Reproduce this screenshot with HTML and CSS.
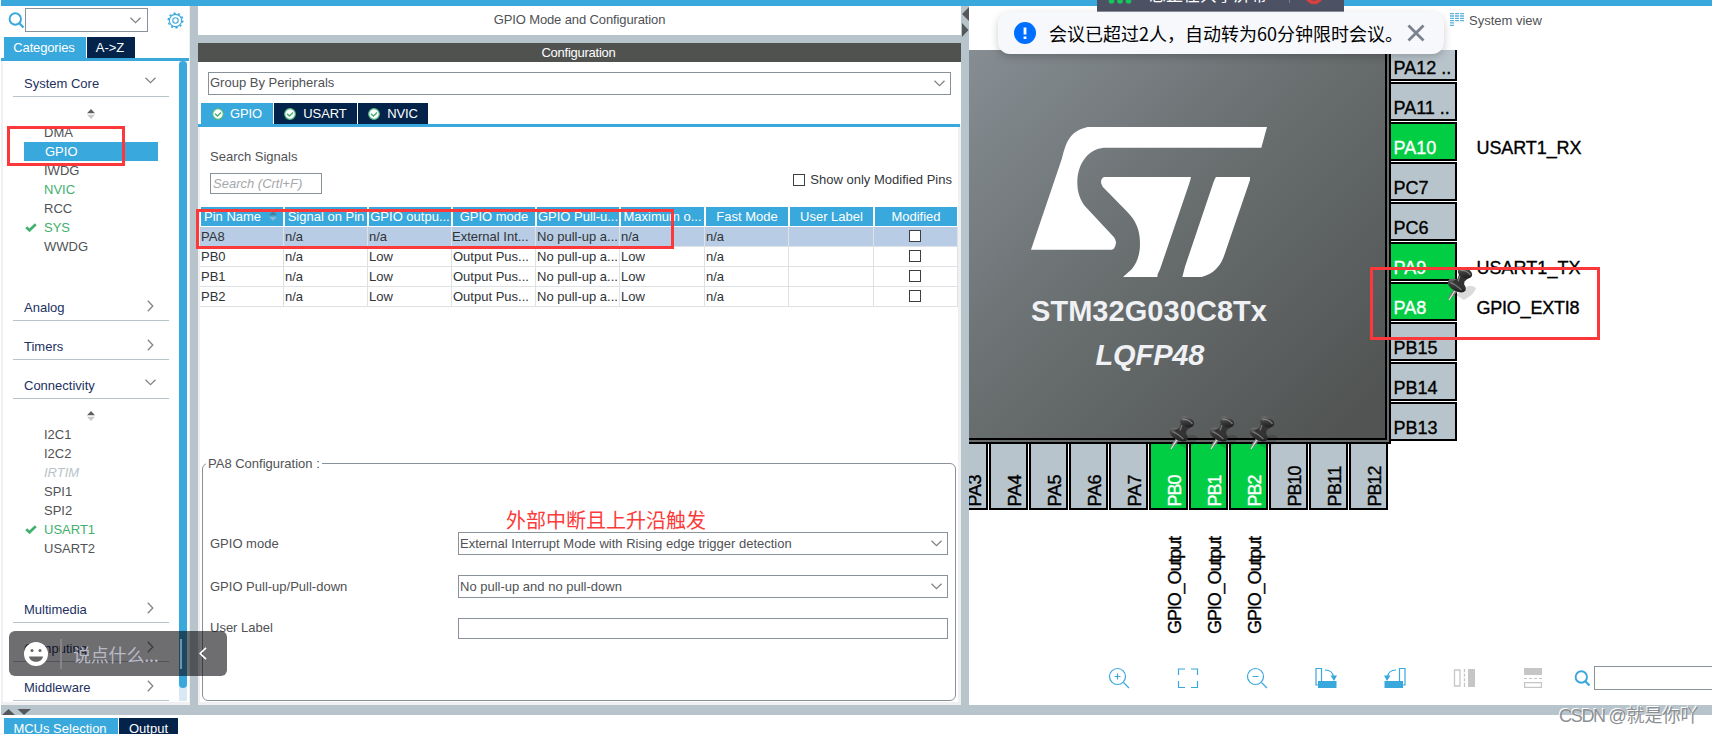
FILE: index.html
```html
<!DOCTYPE html>
<html lang="en">
<head>
<meta charset="utf-8">
<title>GPIO Mode and Configuration</title>
<link rel="stylesheet" href="styles.css">
</head>
<body>
<svg width="0" height="0" class="defs">
  <symbol id="down" viewBox="0 0 11 7"><path d="M.5 .8 5.5 5.6 10.500 .8" fill="none" stroke="#808487" stroke-width="1.3"/></symbol>
  <symbol id="right" viewBox="0 0 7 12"><path d="M.8 .8 5.800 6 .8 11.200" fill="none" stroke="#808487" stroke-width="1.3"/></symbol>
  <symbol id="sort" viewBox="0 0 8 10"><path d="M4 0 8 4.200H0Z" fill="#5d6063"/><path d="M0 5.800H8L4 10Z" fill="#c6c8ca"/></symbol>
  <symbol id="tick" viewBox="0 0 12 9"><path d="M1.200 4.200 4.500 7.300 10.800 1.200" fill="none" stroke="#41b06e" stroke-width="2.600"/></symbol>
  <symbol id="ok" viewBox="0 0 12 12"><circle cx="6" cy="6" r="5.300" fill="#fff" stroke="#55b983" stroke-width="1.200"/><path d="M3 5.700 5.500 8 9 4.600" fill="none" stroke="#41b06e" stroke-width="1.400"/></symbol>
  <symbol id="search" viewBox="0 0 17 17"><circle cx="7.300" cy="7" r="5.700" fill="none" stroke="#39a8dc" stroke-width="1.900"/><path d="M11.300 11.300 15.500 15.600" stroke="#39a8dc" stroke-width="2.200"/></symbol>
</svg>

<div class="app">
  <div class="topbar"></div>
  <div class="workspace">
    <aside class="side">
      <div class="side-search">
        <svg class="mag"><use href="#search"/></svg>
        <div class="box side-input"><svg class="down"><use href="#down"/></svg></div>
        <svg class="gear" viewBox="0 0 17 17"><circle cx="8.500" cy="8.500" r="6.100"/><circle cx="8.500" cy="8.500" r="2.700"/><circle class="teeth" cx="8.500" cy="8.500" r="7.300"/></svg>
      </div>
      <div class="tabs side-tabs"><span class="tab on cat">Categories</span><span class="tab az">A-&gt;Z</span></div>
      <div class="tree-wrap">
        <div class="tree">
          <div class="group first"><span>System Core</span><svg class="down"><use href="#down"/></svg></div>
          <div class="items">
            <svg class="sort"><use href="#sort"/></svg>
            <div class="item">DMA</div>
            <div class="item sel">GPIO</div>
            <div class="item">IWDG</div>
            <div class="item green">NVIC</div>
            <div class="item">RCC</div>
            <div class="item green"><svg class="tick"><use href="#tick"/></svg>SYS</div>
            <div class="item">WWDG</div>
          </div>
          <div class="group"><span>Analog</span><svg class="right"><use href="#right"/></svg></div>
          <div class="group"><span>Timers</span><svg class="right"><use href="#right"/></svg></div>
          <div class="group"><span>Connectivity</span><svg class="down"><use href="#down"/></svg></div>
          <div class="items">
            <svg class="sort"><use href="#sort"/></svg>
            <div class="item">I2C1</div>
            <div class="item">I2C2</div>
            <div class="item off">IRTIM</div>
            <div class="item">SPI1</div>
            <div class="item">SPI2</div>
            <div class="item green"><svg class="tick"><use href="#tick"/></svg>USART1</div>
            <div class="item">USART2</div>
          </div>
          <div class="group"><span>Multimedia</span><svg class="right"><use href="#right"/></svg></div>
          <div class="group"><span>Computing</span><svg class="right"><use href="#right"/></svg></div>
          <div class="group"><span>Middleware</span><svg class="right"><use href="#right"/></svg></div>
        </div>
        <div class="track"><div class="thumb"></div></div>
      </div>
    </aside>

    <main class="config">
      <div class="title">GPIO Mode and Configuration</div>
      <div class="bar">Configuration</div>
      <div class="box select group-by"><span>Group By Peripherals</span><svg class="down"><use href="#down"/></svg></div>
      <div class="tabs conf-tabs">
        <span class="tab on t1"><svg class="ok"><use href="#ok"/></svg>GPIO</span>
        <span class="tab t2"><svg class="ok"><use href="#ok"/></svg>USART</span>
        <span class="tab t3"><svg class="ok"><use href="#ok"/></svg>NVIC</span>
      </div>
      <div class="panel">
        <div class="signals">Search Signals</div>
        <div class="filter">
          <div class="box signal-input">Search (Crtl+F)</div>
          <label class="only"><i class="check"></i>Show only Modified Pins</label>
        </div>
        <div class="table">
          <div class="row head"><b class="left">Pin Name<svg class="sort dim"><use href="#sort"/></svg></b><b>Signal on Pin</b><b>GPIO outpu...</b><b>GPIO mode</b><b>GPIO Pull-u...</b><b>Maximum o...</b><b>Fast Mode</b><b>User Label</b><b>Modified</b></div>
          <div class="row hot"><span>PA8</span><span>n/a</span><span>n/a</span><span class="ext">External Int...</span><span>No pull-up a...</span><span>n/a</span><span>n/a</span><span></span><span class="mid"><i class="check"></i></span></div>
          <div class="row"><span>PB0</span><span>n/a</span><span>Low</span><span>Output Pus...</span><span>No pull-up a...</span><span>Low</span><span>n/a</span><span></span><span class="mid"><i class="check"></i></span></div>
          <div class="row"><span>PB1</span><span>n/a</span><span>Low</span><span>Output Pus...</span><span>No pull-up a...</span><span>Low</span><span>n/a</span><span></span><span class="mid"><i class="check"></i></span></div>
          <div class="row"><span>PB2</span><span>n/a</span><span>Low</span><span>Output Pus...</span><span>No pull-up a...</span><span>Low</span><span>n/a</span><span></span><span class="mid"><i class="check"></i></span></div>
        </div>
        <div class="pin-conf">
          <div class="legend">PA8 Configuration :</div>
          <div class="field"><span>GPIO mode</span><div class="box select"><span>External Interrupt Mode with Rising edge trigger detection</span><svg class="down"><use href="#down"/></svg></div></div>
          <div class="field"><span>GPIO Pull-up/Pull-down</span><div class="box select"><span>No pull-up and no pull-down</span><svg class="down"><use href="#down"/></svg></div></div>
          <div class="field last"><span>User Label</span><div class="box select"></div></div>
        </div>
      </div>
    </main>

    <div class="splitter"><svg viewBox="0 0 8 40"><path d="M8 1V15L1 8ZM1 17V31L7.500 24Z" fill="#55585b"/></svg></div>

    <section class="view">
      <div class="view-head">
        <svg width="14" height="13" viewBox="0 0 14 13"><path d="M0 .7H4M0 3H4M0 5.300H4M0 7.600H4M0 9.900H4M0 12.300H4M5 .7H9M5 3H9M5 5.300H9M5 7.600H9M10 .7H14M10 3H14M10 5.300H14M10 7.600H14" stroke="#5cb3dd" stroke-width="1.300"/></svg>
        <span>System view</span>
      </div>
      <svg class="chip" viewBox="969 50 743 600" width="743" height="600">
        <defs>
          <linearGradient id="body" gradientUnits="userSpaceOnUse" x1="969" y1="60" x2="1340" y2="431"><stop offset="0" stop-color="#858d92"/><stop offset=".5" stop-color="#686d6e"/><stop offset="1" stop-color="#515453"/></linearGradient>
          <linearGradient id="metal" x1="0" y1="0" x2="1" y2="1"><stop offset="0" stop-color="#8a8a8a"/><stop offset=".45" stop-color="#3c3c3c"/><stop offset="1" stop-color="#131313"/></linearGradient>
          <g id="pushpin">
            <path d="M9 28 16 22C21 19 23 17 29 21 27 27 22 30 17 33Z" fill="#000" opacity=".14"/>
            <path d="M1 34 2.500 28.500 7 22 11 24 6 29.500Z" fill="#777"/>
            <path d="M2 33 8 23.500" stroke="#e4e4e4" stroke-width="1.200"/>
            <ellipse cx="9.800" cy="18.500" rx="10" ry="5.600" transform="rotate(30 9.800 18.500)" fill="url(#metal)"/>
            <path d="M5 14.500 10.500 12 12.500 6 22 10.500 17.500 14.500 16.500 21.500Z" fill="#333"/>
            <ellipse cx="18" cy="6" rx="7.600" ry="5" transform="rotate(24 18 6)" fill="url(#metal)"/>
            <path d="M13.500 3.500C17 3 21 5 23.500 8M13 9 11 14.500M3.500 15.500C7 17 11 19.500 14.500 23" stroke="#aaa" stroke-width="1.200" fill="none" opacity=".6"/>
          </g>
        </defs>
        <rect x="960" y="40" width="430" height="403" fill="#686c6d" stroke="#000" stroke-width="2"/>
        <rect x="960" y="40" width="426" height="399" fill="url(#body)" stroke="#000" stroke-width="2"/>
        <g fill="#fff" transform="translate(960 0) scale(.33333)">
          <path d="M383 381H921L904 443H432C385 447 352 490 352 548C352 580 362 602 378 622L462 712Q472 725 465 740Q462 748 455 749H213L305 478C318 430 325 395 383 381Z"/>
          <path d="M432 531H693Q690 545 686 556L600 808Q592 822 592 831H489L515 808C530 790 540 765 540 732C540 700 533 678 520 658Q515 650 500 634L428 560Q420 548 425 538Q428 532 432 531Z"/>
          <path d="M768 531H870V540L792 768C783 795 762 822 725 831H667L675 800 760 548Q764 536 768 531Z"/>
        </g>
        <text class="chip-name" x="1031" y="321" textLength="236">STM32G030C8Tx</text>
        <text class="chip-name slant" x="1095.500" y="365" textLength="109">LQFP48</text>
        <g id="pins"></g>
      </svg>
      <div class="tools">
        <svg width="22" height="22" viewBox="0 0 22 22"><g class="ln"><circle cx="9.500" cy="9.500" r="8"/><path d="M15.500 15.500 21 21M6.500 9.500H12.500M9.500 6.500V12.500"/></g></svg>
        <svg width="22" height="22" viewBox="0 0 22 22"><path class="ln" d="M8 2H1.500V8M14 2H20.500V8M8 20.500H1.500V14M14 20.500H20.500V14"/></svg>
        <svg width="22" height="22" viewBox="0 0 22 22"><g class="ln"><circle cx="9.500" cy="9.500" r="8"/><path d="M15.500 15.500 21 21M6.500 9.500H12.500"/></g></svg>
        <svg width="22" height="22" viewBox="0 0 22 22"><path class="ln" d="M1 1.500H6.500V18H1ZM10 3C15 3 18 6 18.500 10"/><path d="M3 14H21.500V21H3ZM15.500 8.500H22L19 14Z" fill="#39a8dc"/></svg>
        <svg width="22" height="22" viewBox="0 0 22 22"><path class="ln" d="M21 1.500H15.500V18H21ZM12 3C7 3 4 6 3.500 10"/><path d="M.5 14H19V21H.5ZM0 8.500H6.500L3 14Z" fill="#39a8dc"/></svg>
        <svg width="22" height="22" viewBox="0 0 22 22"><path d="M1.500 3H7V19H1.500ZM11.500 2V20" fill="none" stroke="#c6c6c6" stroke-width="1.300"/><path d="M10.500 6H13M10.500 10.500H13M10.500 15H13" stroke="#fff" stroke-width="1.300"/><path d="M15 2H22V20H15Z" fill="#c6c6c6"/></svg>
        <svg width="22" height="22" viewBox="0 0 22 22"><path d="M2 1H20V8H2Z" fill="#c6c6c6"/><path d="M2 11.500H20" stroke="#c6c6c6" stroke-dasharray="3 2"/><path d="M2.600 15.600H19.400V20.400H2.600Z" fill="none" stroke="#c6c6c6" stroke-width="1.300"/></svg>
        <svg class="mag"><use href="#search"/></svg>
        <div class="box tool-input"></div>
      </div>
    </section>
  </div>
  <div class="divider"><svg width="30" height="6" viewBox="0 0 30 6"><path d="M0 6H13L6.500 0ZM15.500 0H29L22 6Z" fill="#55585b"/></svg></div>
  <div class="tabs bottom-tabs"><span class="tab on mcus">MCUs Selection</span><span class="tab out">Output</span></div>
</div>

<div class="mark m1"></div>
<div class="mark m2"></div>
<div class="mark m3"></div>
<div class="note">外部中断且上升沿触发</div>

<div class="share">
  <svg width="247" height="12" viewBox="0 0 247 12"><path d="M14.500-4V1M23-4V1M31.500-4V1" stroke="#12c95b" stroke-width="5.500" stroke-linecap="round"/><path d="M192.500 0V3" stroke="#7b8090"/><circle cx="217" cy="-5" r="7.500" fill="none" stroke="#d84040" stroke-width="3.500"/></svg>
  <span>您正在共享屏幕</span>
</div>
<div class="toast">
  <svg width="22" height="22" viewBox="0 0 22 22"><circle cx="11" cy="11" r="11" fill="#006eff"/><path d="M11 5.500V12.500M11 14.500V17" stroke="#fff" stroke-width="2.800"/></svg>
  <span>会议已超过2人，自动转为60分钟限时会议。</span>
  <svg width="18" height="18" viewBox="0 0 18 18"><path d="M1.500 1.500 16.500 16.500M16.500 1.500 1.500 16.500" stroke="#7a808e" stroke-width="2.800"/></svg>
</div>
<div class="chat">
  <svg width="24" height="24" viewBox="0 0 24 24"><circle cx="12" cy="12" r="12" fill="#fff"/><path d="M5 14.500H19C18 21.500 6 21.500 5 14.500Z" fill="#666"/><circle cx="8" cy="8.500" r="1.500" fill="#666"/><circle cx="16" cy="8.500" r="1.500" fill="#666"/></svg>
  <i></i><span>说点什么...</span><i></i>
  <svg width="8" height="13" viewBox="0 0 8 13"><path d="M7 .8 1.200 6.500 7 12.200" fill="none" stroke="#fff" stroke-width="1.700"/></svg>
</div>
<div class="watermark"><span>CSDN @</span>就是你吖</div>
<script src="pins.js"></script>
</body>
</html>
```
FILE: pins.js
```js
// Draws the pins on the right and bottom edges of the package.
var side = [['PA12 ..'], ['PA11 ..'], ['PA10', 'USART1_RX', 105], ['PC7'], ['PC6'], ['PA9', 'USART1_TX', 104], ['PA8', 'GPIO_EXTI8', 103], ['PB15'], ['PB14'], ['PB13']];
var bottom = ['PA3', 'PA4', 'PA5', 'PA6', 'PA7', 'PB0', 'PB1', 'PB2', 'PB10', 'PB11', 'PB12'];
var out = '';
side.forEach(function (p, i) {
  var y = 42 + i * 40, used = p.length > 1;
  out += '<rect class="pin' + (used ? ' used' : '') + '" x="1390" y="' + (y + 1) + '" width="66" height="37"/>';
  out += '<text class="pin-text' + (used ? ' lit' : '') + '" x="1393.500" y="' + (y + 32) + '">' + p[0] + '</text>';
  if (used) out += '<text class="pin-text" x="1476.500" y="' + (y + 32) + '" textLength="' + p[2] + '">' + p[1] + '</text>';
});
bottom.forEach(function (name, i) {
  var x = 949 + i * 40, used = /^PB[012]$/.test(name);
  out += '<rect class="pin' + (used ? ' used' : '') + '" x="' + (x + 1) + '" y="443" width="37" height="66"/>';
  out += '<text class="pin-text' + (used ? ' lit' : '') + '" textLength="' + (name.length === 3 ? 32 : 41) + '" transform="translate(' + (x + 32) + ' 506.500) rotate(-90)">' + name + '</text>';
  if (used) out += '<text class="pin-text" textLength="98" transform="translate(' + (x + 32) + ' 634) rotate(-90)">GPIO_Output</text>';
});
out += '<path d="M1390 50V443H969" fill="none" stroke="#000" stroke-width="2"/>';
[[1169, 416], [1209, 416], [1249, 416], [1447, 267]].forEach(function (p) {
  out += '<use href="#pushpin" transform="translate(' + p[0] + ' ' + p[1] + ')"/>';
});
document.getElementById('pins').innerHTML = out;
```
FILE: styles.css
```css
* { box-sizing: border-box; }
body {
  margin: 0;
  width: 1712px;
  height: 734px;
  overflow: hidden;
  position: relative;
  background: #fff;
  color: #505255;
  font: 13px/16px "Liberation Sans", Arial, "Noto Sans CJK SC", sans-serif;
}
svg { display: block; flex: none; }
.defs { position: absolute; }
.app { height: 734px; padding-left: 1px; display: flex; flex-direction: column; overflow: hidden; }
.topbar { height: 6px; flex: none; background: #39a8dc; }
.workspace { height: 699px; flex: none; display: flex; }
.box { border: 1px solid #8a9299; background: #fff; display: flex; align-items: center; }
.down { width: 11px; height: 7px; }
.right { width: 7px; height: 12px; margin-right: 2px; }
.sort { width: 8px; height: 10px; }
.mag { width: 17px; height: 17px; }
.tabs { display: flex; gap: 1px; align-items: flex-end; }
.tab { height: 21px; background: #03234b; color: #fff; display: flex; align-items: center; justify-content: center; white-space: nowrap; }
.tab.on { background: #39a8dc; }

/* category tree */
.side { width: 189px; border-right: 1px solid #eef0f2; display: flex; flex-direction: column; flex: none; }
.side-search { display: flex; align-items: center; height: 31px; padding: 2px 0 5px 7px; }
.side-input { width: 123px; height: 24px; justify-content: flex-end; padding-right: 6px; }
.gear { width: 17px; height: 17px; margin-left: 19px; fill: none; stroke: #39a8dc; stroke-width: 1.1; }
.teeth { stroke-width: 1.4; stroke-dasharray: 2.3 2.287; }
.side-tabs { height: 24px; padding-left: 3px; align-items: flex-start; border-bottom: 3px solid #39a8dc; }
.cat { width: 82px; letter-spacing: -.15px; padding-right: 2px; }
.az { width: 48px; padding-right: 2px; }
.tree-wrap { flex: 1; display: flex; border-left: 2px solid #f0f0f2; border-bottom: 3px solid #f0f0f2; overflow: hidden; }
.tree { width: 176px; padding: 0 10px; margin-top: -3px; flex: none; }
.group { height: 39px; border-bottom: 1px solid #b8c4cb; display: flex; justify-content: space-between; padding: 18px 13px 0 11px; color: #22315f; }
.group .down { margin-top: 1px; }
.items { height: 185px; padding: 13px 11px 0; }
.items .sort { margin: -1px 0 4px 62.5px; }
.item { height: 19px; line-height: 19px; padding-left: 20px; display: flex; }
.sel { background: #39a8dc; color: #fff; padding-left: 21px; }
.green { color: #41b06e; }
.off { color: #b8c4cb; font-style: italic; }
.tick { width: 12px; height: 9px; margin: 5px 7px 0 -19px; }
.track { width: 8px; height: 640px; background: #d8e8f5; }
.thumb { width: 8px; height: 627px; background: #39a8dc; border-radius: 4px; }

/* configuration */
.config { width: 771px; border-left: 8px solid #b8c4cb; flex: none; display: flex; flex-direction: column; }
.title { height: 37px; flex: none; padding-top: 6px; border-bottom: 8px solid #b8c4cb; text-align: center; letter-spacing: -.12px; }
.bar { height: 19px; line-height: 20px; background: #505250; color: #fff; text-align: center; letter-spacing: -.25px; padding-right: 2px; flex: none; }
.select { padding: 0 5px 0 1px; justify-content: space-between; height: 23px; }
.group-by { margin: 10px 10px 8px; padding-bottom: 1px; flex: none; }
.conf-tabs { padding-left: 3px; height: 21px; flex: none; }
.conf-tabs .tab { letter-spacing: -.1px; }
.ok { width: 12px; height: 12px; margin-right: 6px; }
.t1 { width: 72px; }
.t2 { width: 83px; }
.t3 { width: 70px; }
.t2 .ok, .t3 .ok { margin-right: 7px; }
.panel { flex: 1; border: solid #f0f0f2; border-width: 0 3px 3px 2px; position: relative; display: flex; flex-direction: column; }
.panel::before { content: ""; height: 3px; background: #39a8dc; margin: 0 -2px; flex: none; }
.signals { margin: 22px 0 8px 10px; }
.filter { height: 21px; display: flex; justify-content: space-between; padding: 0 6px 0 10px; }
.signal-input { width: 112px; padding-left: 2px; color: #a5a8ab; font-style: italic; }
.only { display: flex; align-items: center; gap: 5px; color: #34373a; height: 14px; white-space: nowrap; }
.check { width: 12px; height: 12px; border: 1px solid #3c3f42; background: #fff; }
.table { margin-top: 13px; color: #303336; }
.row { display: grid; grid-template-columns: 84px 84px 84px 84px 84px 85px 84px 85px 84px; height: 20px; margin-right: -1px; }
.row > * { border: solid #dfe2e5; border-width: 0 1px 1px 0; padding-left: 1px; line-height: 19px; white-space: nowrap; overflow: hidden; font-weight: normal; }
.row .ext { padding-left: 0; }
.hot > * { background: #b8cde5; }
.head > b { border: 1px solid #fff; border-top: 0; background: #39a8dc; color: #fff; text-align: center; padding: 0; }
.head > .left { display: flex; padding-left: 3px; gap: 8px; }
.dim { opacity: .55; margin-top: 4px; }
.row .mid { display: flex; justify-content: center; padding: 3px 1px 0 0; }
.pin-conf { position: relative; margin: 156px 2px 0 2px; height: 238px; border: 1px solid #8a9299; border-radius: 6px; padding: 68px 7px 0 7px; width: 754px; }
.legend { position: absolute; left: 3px; top: -8px; background: #fff; padding: 0 2px; }
.field { display: flex; height: 43px; }
.field > span { width: 248px; line-height: 23px; }
.field .select { width: 490px; }
.last .select { height: 21px; }
.last > span { line-height: 20px; }

/* pinout */
.splitter { width: 8px; background: #b8c4cb; flex: none; }
.splitter svg { width: 8px; height: 40px; }
.view { width: 743px; display: flex; flex-direction: column; overflow: hidden; }
.view-head { height: 44px; display: flex; gap: 5px; padding: 7px 0 0 481px; flex: none; }
.chip-name { font-size: 29px; font-weight: bold; fill: #f0f1f4; }
.slant { font-style: italic; }
.pin { fill: #b8c4cb; stroke: #000; stroke-width: 2; }
.used { fill: #02ce43; }
.pin-text { font-size: 18px; fill: #000; stroke: #000; stroke-width: .35; }
.lit { fill: #fff; stroke: #fff; }
.tools { height: 55px; display: flex; align-items: flex-start; padding: 17px 0 0 139px; gap: 47px; }
.tools .mag { margin: 3px 0 0 -17px; }
.tool-input { width: 130px; height: 24px; margin: -1px 0 0 -44px; flex: none; }
.ln { fill: none; stroke: #39a8dc; stroke-width: 1.2; }
.divider { height: 10px; flex: none; background: #b8c4cb; padding: 4px 0 0 1px; }
.bottom-tabs { padding: 3px 0 0 3px; flex: none; color: #fff; }
.mcus { width: 114px; padding-right: 2px; }
.out { width: 59px; }

/* annotations and meeting overlays */
.mark { position: absolute; border: 3px solid #fd383a; }
.m1 { left: 7px; top: 126px; width: 118px; height: 40px; }
.m2 { left: 196px; top: 209px; width: 478px; height: 40px; }
.m3 { left: 1370px; top: 267px; width: 230px; height: 73px; }
.note { position: absolute; left: 506px; top: 505px; font: 20px/30px "Noto Sans CJK SC", sans-serif; color: #fd3a3a; }
.share { position: absolute; left: 1097px; top: 0; width: 247px; height: 12px; background: #4c5263; border-bottom: 1px solid #8d909b; overflow: hidden; }
.share span { position: absolute; left: 52px; top: -15px; font: 17px/18px "Noto Sans CJK SC", sans-serif; color: #fff; }
.toast { position: absolute; left: 998px; top: 12px; width: 446px; height: 42px; border-radius: 12px; background: #f7f8fc; box-shadow: 0 3px 9px rgba(0,0,0,.2); display: flex; align-items: center; padding-left: 16px; color: #000; }
.toast span { font: 18px/26px "Noto Sans CJK SC", sans-serif; width: 358px; margin-left: 13px; white-space: nowrap; }
.chat { position: absolute; left: 9px; top: 631px; width: 218px; height: 45px; border-radius: 6px; background: rgba(5,5,8,.58); display: flex; align-items: center; padding-left: 15px; }
.chat i { width: 2px; height: 30px; background: #858589; margin-left: 12px; }
.chat span { width: 106px; padding-left: 11px; font: 18px/24px "Noto Sans CJK SC", sans-serif; color: #b9b9c8; white-space: nowrap; letter-spacing: -.2px; }
.chat svg:last-child { margin-left: 17px; }
.chat i:nth-of-type(2) { background: #6f93a8; }
.watermark { position: absolute; left: 1559px; top: 703px; font: 18px/26px "Liberation Sans", "Noto Sans CJK SC", sans-serif; color: #8d9093; text-shadow: -1px -1px 0 #fff; white-space: nowrap; }
.watermark span { letter-spacing: -1.3px; margin-right: 1px; }
```
